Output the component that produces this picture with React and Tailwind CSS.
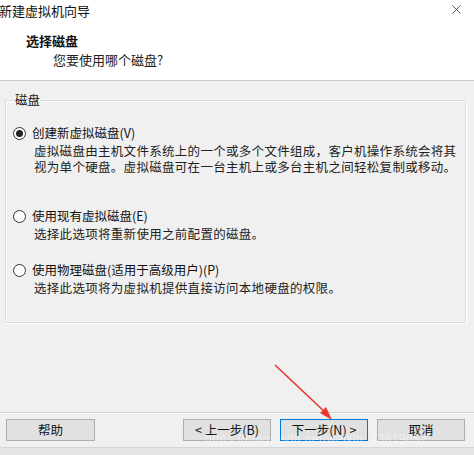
import { X } from "lucide-react";

const FONT = { fontFamily: '"Microsoft YaHei", "Noto Sans CJK SC", sans-serif' };

function Radio({ checked }) {
  return (
    <span className="w-[13px] h-[13px] rounded-full border border-[#333] bg-white flex items-center justify-center shrink-0">
      {checked && <span className="w-[7px] h-[7px] rounded-full bg-[#222]" />}
    </span>
  );
}

function Option({ checked, label, lines, className = "" }) {
  return (
    <div className={className}>
      <div className="flex items-center gap-[6px] h-[16px]">
        <Radio checked={checked} />
        <span className="text-[12.5px] text-[#111] leading-none">{label}</span>
      </div>
      <div className="pl-[21px] mt-[1px] text-[12.5px] leading-[16px] text-[#222] tracking-[0.3px]">
        {lines.map((l) => (
          <p key={l}>{l}</p>
        ))}
      </div>
    </div>
  );
}

function Btn({ children, primary, className = "" }) {
  return (
    <button
      className={`h-[22px] text-[12.5px] text-[#111] bg-[#e1e1e1] border flex items-center justify-center ${
        primary ? "border-[#0078d7]" : "border-[#adadad]"
      } ${className}`}
    >
      {children}
    </button>
  );
}

export default function App() {
  return (
    <div className="w-[474px] h-[455px] bg-white relative overflow-hidden" style={FONT}>
      {/* Header */}
      <div className="h-[81px] bg-white border-b border-[#c8c8c8] relative">
        <p className="text-[13px] text-[#111] leading-none pt-[4px] -ml-[1px]">新建虚拟机向导</p>
        <X size={15} strokeWidth={1.2} className="absolute right-[10px] top-[2px] text-[#222]" />
        <p className="text-[13px] font-bold text-[#111] leading-none mt-[17px] ml-[26px]">选择磁盘</p>
        <p className="text-[13px] text-[#222] leading-none mt-[6px] ml-[53px]">您要使用哪个磁盘?</p>
      </div>

      {/* Body */}
      <div className="h-[366px] bg-[#f0f0f0] pt-[13px] flex flex-col">
        <fieldset className="ml-[5px] w-[461px] h-[229px] border border-[#dcdcdc] shadow-[inset_1px_1px_0_#fff,1px_1px_0_#fff] px-[7px]">
          <legend className="px-[1px] ml-[1px] text-[12.5px] text-[#111] leading-none">磁盘</legend>
          <Option
            className="mt-[19px]"
            checked
            label="创建新虚拟磁盘(V)"
            lines={[
              "虚拟磁盘由主机文件系统上的一个或多个文件组成，客户机操作系统会将其",
              "视为单个硬盘。虚拟磁盘可在一台主机上或多台主机之间轻松复制或移动。",
            ]}
          />
          <Option
            className="mt-[34px]"
            label="使用现有虚拟磁盘(E)"
            lines={["选择此选项将重新使用之前配置的磁盘。"]}
          />
          <Option
            className="mt-[21px]"
            label="使用物理磁盘(适用于高级用户)(P)"
            lines={["选择此选项将为虚拟机提供直接访问本地硬盘的权限。"]}
          />
        </fieldset>

        <div className="mt-auto border-t border-[#d0d0d0] h-[35px] flex items-center px-[6px] shadow-[inset_0_1px_0_#fff]">
          <Btn className="w-[89px]">帮助</Btn>
          <Btn className="w-[88px] ml-[88px]">&lt; 上一步(B)</Btn>
          <Btn primary className="w-[88px] ml-[9px]">下一步(N) &gt;</Btn>
          <Btn className="w-[88px] ml-[9px]">取消</Btn>
        </div>
      </div>

      {/* Window bottom edge */}
      <div className="h-[8px] bg-[#e4e4e4] border-t border-[#d6d6d6]" />

      {/* Watermark */}
      <p className="absolute left-[205px] top-[430px] text-[12px] text-white/50 tracking-[0.5px] pointer-events-none" style={{ fontFamily: '"Liberation Sans", sans-serif' }}>
        https://blog.csdn.net/weixin_43819052
      </p>

      {/* Red annotation arrow */}
      <svg className="absolute left-0 top-0 pointer-events-none" width="474" height="455" viewBox="0 0 474 455">
        <line x1="275" y1="365" x2="327" y2="414" stroke="#e8372e" strokeWidth="1.6" />
        <polygon points="332,420 320,413 326,407" fill="#e8372e" />
      </svg>
    </div>
  );
}
